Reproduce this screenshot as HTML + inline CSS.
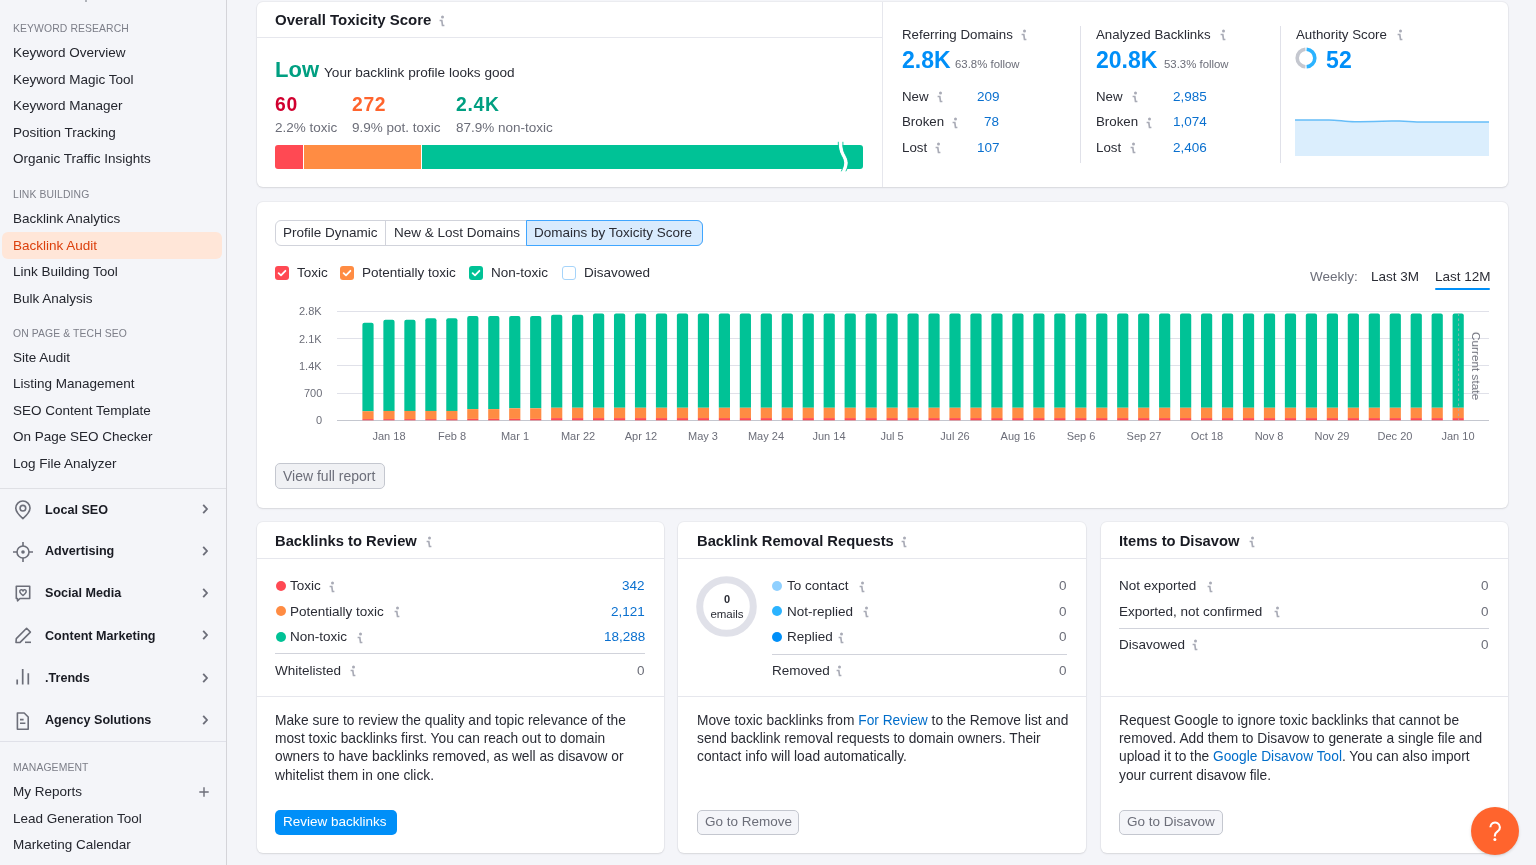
<!DOCTYPE html>
<html><head><meta charset="utf-8"><title>Backlink Audit</title>
<style>
html,body{margin:0;padding:0;}
body{width:1536px;height:865px;overflow:hidden;background:#f4f5f9;position:relative;font-family:"Liberation Sans",sans-serif;}
.t{position:absolute;line-height:20px;white-space:nowrap;will-change:transform;}
.r{position:absolute;box-sizing:border-box;}
.ic{position:absolute;overflow:visible;}
.card{position:absolute;background:#fff;border-radius:6px;box-shadow:0 1px 2px rgba(25,27,35,.10),0 0 0 1px rgba(25,27,35,.035);}
.hl{position:absolute;height:1px;background:#e0e1e9;}
.vl{position:absolute;width:1px;background:#e0e1e9;}
</style></head><body>

<div class="r" style="left:226px;top:0px;width:1px;height:865px;background:#d4d4d9;"></div>
<div class="r" style="left:85px;top:0px;width:2px;height:2px;background:#9a9ca5;border-radius:1px;"></div>
<div class="t" style="top:19.20px;font-size:10.4px;color:#7c7e88;letter-spacing:0.1px;left:13.00px;">KEYWORD RESEARCH</div>
<div class="t" style="top:43.02px;font-size:13.5px;color:#24262e;left:13.00px;">Keyword Overview</div>
<div class="t" style="top:69.52px;font-size:13.5px;color:#24262e;left:13.00px;">Keyword Magic Tool</div>
<div class="t" style="top:96.02px;font-size:13.5px;color:#24262e;left:13.00px;">Keyword Manager</div>
<div class="t" style="top:122.52px;font-size:13.5px;color:#24262e;left:13.00px;">Position Tracking</div>
<div class="t" style="top:149.02px;font-size:13.5px;color:#24262e;left:13.00px;">Organic Traffic Insights</div>
<div class="t" style="top:184.90px;font-size:10.4px;color:#7c7e88;letter-spacing:0.1px;left:13.00px;">LINK BUILDING</div>
<div class="r" style="left:2px;top:231.5px;width:220px;height:27px;background:#ffe6d8;border-radius:6px;"></div>
<div class="t" style="top:209.22px;font-size:13.5px;color:#24262e;left:13.00px;">Backlink Analytics</div>
<div class="t" style="top:235.82px;font-size:13.5px;color:#dc3f0c;left:13.00px;">Backlink Audit</div>
<div class="t" style="top:262.42px;font-size:13.5px;color:#24262e;left:13.00px;">Link Building Tool</div>
<div class="t" style="top:289.02px;font-size:13.5px;color:#24262e;left:13.00px;">Bulk Analysis</div>
<div class="t" style="top:323.90px;font-size:10.4px;color:#7c7e88;letter-spacing:0.1px;left:13.00px;">ON PAGE &amp; TECH SEO</div>
<div class="t" style="top:347.92px;font-size:13.5px;color:#24262e;left:13.00px;">Site Audit</div>
<div class="t" style="top:374.42px;font-size:13.5px;color:#24262e;left:13.00px;">Listing Management</div>
<div class="t" style="top:400.92px;font-size:13.5px;color:#24262e;left:13.00px;">SEO Content Template</div>
<div class="t" style="top:427.42px;font-size:13.5px;color:#24262e;left:13.00px;">On Page SEO Checker</div>
<div class="t" style="top:453.92px;font-size:13.5px;color:#24262e;left:13.00px;">Log File Analyzer</div>
<div class="r" style="left:0px;top:487.5px;width:226px;height:1px;background:#dfe0e5;"></div>
<svg class="ic" style="left:14px;top:499px" width="18" height="21" viewBox="0 0 18 21"><path d="M8.9 19.6C8.9 19.6 1.8 13.6 1.8 9.1A7.1 7.1 0 0 1 16 9.1C16 13.6 8.9 19.6 8.9 19.6Z" fill="none" stroke="#6c6e79" stroke-width="1.6" stroke-linejoin="round"/><circle cx="8.9" cy="9.2" r="2.8" fill="none" stroke="#6c6e79" stroke-width="1.6"/></svg>
<div class="t" style="top:499.83px;font-size:12.6px;color:#191b23;font-weight:700;left:44.50px;">Local SEO</div>
<svg class="ic" style="left:201px;top:503.3px" width="8" height="12" viewBox="0 0 8 12"><path d="M2.2 1.8L6 6L2.2 10.2" fill="none" stroke="#6c6e79" stroke-width="1.8"/></svg>
<svg class="ic" style="left:13px;top:541.5px" width="20" height="20" viewBox="0 0 20 20"><circle cx="10" cy="10" r="6" fill="none" stroke="#6c6e79" stroke-width="1.6"/><circle cx="10" cy="10" r="1.8" fill="#6c6e79"/><path d="M10 0V4M10 16V20M0 10H4M16 10H20" stroke="#6c6e79" stroke-width="1.6"/></svg>
<div class="t" style="top:541.33px;font-size:12.6px;color:#191b23;font-weight:700;left:44.50px;">Advertising</div>
<svg class="ic" style="left:201px;top:544.8px" width="8" height="12" viewBox="0 0 8 12"><path d="M2.2 1.8L6 6L2.2 10.2" fill="none" stroke="#6c6e79" stroke-width="1.8"/></svg>
<svg class="ic" style="left:14px;top:584.3px" width="18" height="18" viewBox="0 0 18 18"><path d="M2.3 2.3H15.7V14.5H6L3.5 16.8V14.5H2.3Z" fill="none" stroke="#6c6e79" stroke-width="1.6" stroke-linejoin="round"/><path d="M9 11.5C7 10 5.8 9 5.8 7.6A1.6 1.6 0 0 1 9 7A1.6 1.6 0 0 1 12.2 7.6C12.2 9 11 10 9 11.5Z" fill="none" stroke="#6c6e79" stroke-width="1.5" stroke-linejoin="round"/></svg>
<div class="t" style="top:583.33px;font-size:12.6px;color:#191b23;font-weight:700;left:44.50px;">Social Media</div>
<svg class="ic" style="left:201px;top:586.8px" width="8" height="12" viewBox="0 0 8 12"><path d="M2.2 1.8L6 6L2.2 10.2" fill="none" stroke="#6c6e79" stroke-width="1.8"/></svg>
<svg class="ic" style="left:13.5px;top:626px" width="19" height="19" viewBox="0 0 19 19"><path d="M2 16.5L2.3 12.6L12.6 2.3L16.4 6.1L6.1 16.4Z" fill="none" stroke="#6c6e79" stroke-width="1.6" stroke-linejoin="round"/><path d="M11 16.3H17" stroke="#6c6e79" stroke-width="1.6"/></svg>
<div class="t" style="top:625.83px;font-size:12.6px;color:#191b23;font-weight:700;left:44.50px;">Content Marketing</div>
<svg class="ic" style="left:201px;top:629.3px" width="8" height="12" viewBox="0 0 8 12"><path d="M2.2 1.8L6 6L2.2 10.2" fill="none" stroke="#6c6e79" stroke-width="1.8"/></svg>
<svg class="ic" style="left:14px;top:669px" width="18" height="18" viewBox="0 0 18 18"><path d="M3.2 10.5V15.5M8.7 0V15.5M14.3 4.3V15.5" stroke="#6c6e79" stroke-width="1.7"/></svg>
<div class="t" style="top:668.03px;font-size:12.6px;color:#191b23;font-weight:700;left:44.50px;">.Trends</div>
<svg class="ic" style="left:201px;top:671.5px" width="8" height="12" viewBox="0 0 8 12"><path d="M2.2 1.8L6 6L2.2 10.2" fill="none" stroke="#6c6e79" stroke-width="1.8"/></svg>
<svg class="ic" style="left:13.5px;top:711px" width="17" height="20" viewBox="0 0 17 20"><path d="M3.4 2H10.2L14.2 6V18.2H3.4Z" fill="none" stroke="#6c6e79" stroke-width="1.6" stroke-linejoin="round"/><path d="M6 8.6H9.6M6 12.2H11.4" stroke="#6c6e79" stroke-width="1.6"/></svg>
<div class="t" style="top:710.33px;font-size:12.6px;color:#191b23;font-weight:700;left:44.50px;">Agency Solutions</div>
<svg class="ic" style="left:201px;top:713.8px" width="8" height="12" viewBox="0 0 8 12"><path d="M2.2 1.8L6 6L2.2 10.2" fill="none" stroke="#6c6e79" stroke-width="1.8"/></svg>
<div class="r" style="left:0px;top:741px;width:226px;height:1px;background:#e0e1e9;"></div>
<div class="t" style="top:757.90px;font-size:10.4px;color:#7c7e88;letter-spacing:0.1px;left:13.00px;">MANAGEMENT</div>
<div class="t" style="top:781.82px;font-size:13.5px;color:#24262e;left:13.00px;">My Reports</div>
<svg class="ic" style="left:198px;top:785.8px" width="12" height="12" viewBox="0 0 12 12"><path d="M6 1.3V10.7M1.3 6H10.7" stroke="#6c6e79" stroke-width="1.4"/></svg>
<div class="t" style="top:808.52px;font-size:13.5px;color:#24262e;left:13.00px;">Lead Generation Tool</div>
<div class="t" style="top:835.32px;font-size:13.5px;color:#24262e;left:13.00px;">Marketing Calendar</div>
<div class="card" style="left:257px;top:2px;width:1251px;height:185px;"></div>
<div class="r" style="left:257px;top:37px;width:625px;height:1px;background:#e6e7ed;"></div>
<div class="r" style="left:882px;top:2px;width:1px;height:185px;background:#e6e7ed;"></div>
<div class="t" style="top:10.40px;font-size:15px;color:#191b23;font-weight:700;left:275.00px;">Overall Toxicity Score</div>
<svg class="ic" style="left:439.00px;top:15.30px" width="7" height="12" viewBox="0 0 7 12"><circle cx="3.5" cy="2.0" r="1.5" fill="#a9abb6"/><path d="M0.6 5.5H2.8L3.5 10.5H5.4" fill="none" stroke="#a9abb6" stroke-width="1.7"/></svg>
<div class="t" style="top:60.38px;font-size:22px;color:#009f81;font-weight:700;left:275.00px;">Low</div>
<div class="t" style="top:63.29px;font-size:13.6px;color:#2a2c35;left:324.00px;">Your backlink profile looks good</div>
<div class="t" style="top:94.81px;font-size:19.3px;color:#d1002f;font-weight:700;letter-spacing:0.7px;left:275.00px;">60</div>
<div class="t" style="top:94.81px;font-size:19.3px;color:#ff642d;font-weight:700;letter-spacing:0.7px;left:352.00px;">272</div>
<div class="t" style="top:94.81px;font-size:19.3px;color:#009f81;font-weight:700;letter-spacing:0.7px;left:456.00px;">2.4K</div>
<div class="t" style="top:118.42px;font-size:13.5px;color:#6c6e79;left:275.00px;">2.2% toxic</div>
<div class="t" style="top:118.42px;font-size:13.5px;color:#6c6e79;left:352.00px;">9.9% pot. toxic</div>
<div class="t" style="top:118.42px;font-size:13.5px;color:#6c6e79;left:456.00px;">87.9% non-toxic</div>
<div class="r" style="left:422px;top:145px;width:441px;height:24px;background:#00c296;border-radius:0 3px 3px 0;"></div>
<div class="r" style="left:275px;top:145px;width:28px;height:24px;background:#ff4953;border-radius:3px 0 0 3px;"></div>
<div class="r" style="left:304px;top:145px;width:117px;height:24px;background:#ff8c43;"></div>
<svg class="ic" style="left:834px;top:141px" width="18" height="32" viewBox="0 0 18 32"><path d="M6.60 0.80C6.30 7.00 7.50 11.00 9.50 14.50C11.50 18.00 12.50 21.00 11.80 24.00C11.30 26.50 10.50 28.50 9.60 30.30" fill="none" stroke="#fff" stroke-width="3.9"/><path d="M4.30 0.80C4.00 7.00 5.20 11.00 7.20 14.50C9.20 18.00 10.20 21.00 9.50 24.00C9.00 26.50 8.20 28.50 7.30 30.30" fill="none" stroke="#00c296" stroke-width="0.9"/><path d="M8.90 0.80C8.60 7.00 9.80 11.00 11.80 14.50C13.80 18.00 14.80 21.00 14.10 24.00C13.60 26.50 12.80 28.50 11.90 30.30" fill="none" stroke="#00c296" stroke-width="0.9"/></svg>
<div class="t" style="top:24.99px;font-size:13.3px;color:#2a2c35;left:901.60px;">Referring Domains</div>
<svg class="ic" style="left:1020.50px;top:29.30px" width="7" height="12" viewBox="0 0 7 12"><circle cx="3.5" cy="2.0" r="1.5" fill="#a9abb6"/><path d="M0.6 5.5H2.8L3.5 10.5H5.4" fill="none" stroke="#a9abb6" stroke-width="1.7"/></svg>
<div class="t" style="top:49.83px;font-size:23px;color:#008ff8;font-weight:700;left:901.60px;">2.8K</div>
<div class="t" style="top:53.65px;font-size:11.4px;color:#6c6e79;left:955.10px;">63.8% follow</div>
<div class="t" style="top:86.79px;font-size:13.3px;color:#2a2c35;left:901.60px;">New</div>
<svg class="ic" style="left:936.50px;top:91.10px" width="7" height="12" viewBox="0 0 7 12"><circle cx="3.5" cy="2.0" r="1.5" fill="#a9abb6"/><path d="M0.6 5.5H2.8L3.5 10.5H5.4" fill="none" stroke="#a9abb6" stroke-width="1.7"/></svg>
<div class="t" style="top:86.72px;font-size:13.5px;color:#0a70cf;right:536.50px;">209</div>
<div class="t" style="top:112.29px;font-size:13.3px;color:#2a2c35;left:901.60px;">Broken</div>
<svg class="ic" style="left:951.80px;top:116.60px" width="7" height="12" viewBox="0 0 7 12"><circle cx="3.5" cy="2.0" r="1.5" fill="#a9abb6"/><path d="M0.6 5.5H2.8L3.5 10.5H5.4" fill="none" stroke="#a9abb6" stroke-width="1.7"/></svg>
<div class="t" style="top:112.22px;font-size:13.5px;color:#0a70cf;right:536.50px;">78</div>
<div class="t" style="top:137.79px;font-size:13.3px;color:#2a2c35;left:901.60px;">Lost</div>
<svg class="ic" style="left:934.80px;top:142.10px" width="7" height="12" viewBox="0 0 7 12"><circle cx="3.5" cy="2.0" r="1.5" fill="#a9abb6"/><path d="M0.6 5.5H2.8L3.5 10.5H5.4" fill="none" stroke="#a9abb6" stroke-width="1.7"/></svg>
<div class="t" style="top:137.72px;font-size:13.5px;color:#0a70cf;right:536.50px;">107</div>
<div class="r" style="left:1080px;top:26px;width:1px;height:137px;background:#e0e1e9;"></div>
<div class="t" style="top:24.99px;font-size:13.3px;color:#2a2c35;left:1096.00px;">Analyzed Backlinks</div>
<svg class="ic" style="left:1220.30px;top:29.30px" width="7" height="12" viewBox="0 0 7 12"><circle cx="3.5" cy="2.0" r="1.5" fill="#a9abb6"/><path d="M0.6 5.5H2.8L3.5 10.5H5.4" fill="none" stroke="#a9abb6" stroke-width="1.7"/></svg>
<div class="t" style="top:49.83px;font-size:23px;color:#008ff8;font-weight:700;left:1096.00px;">20.8K</div>
<div class="t" style="top:53.65px;font-size:11.4px;color:#6c6e79;left:1163.80px;">53.3% follow</div>
<div class="t" style="top:86.79px;font-size:13.3px;color:#2a2c35;left:1096.00px;">New</div>
<svg class="ic" style="left:1131.50px;top:91.10px" width="7" height="12" viewBox="0 0 7 12"><circle cx="3.5" cy="2.0" r="1.5" fill="#a9abb6"/><path d="M0.6 5.5H2.8L3.5 10.5H5.4" fill="none" stroke="#a9abb6" stroke-width="1.7"/></svg>
<div class="t" style="top:86.72px;font-size:13.5px;color:#0a70cf;right:329.70px;">2,985</div>
<div class="t" style="top:112.29px;font-size:13.3px;color:#2a2c35;left:1096.00px;">Broken</div>
<svg class="ic" style="left:1146.00px;top:116.60px" width="7" height="12" viewBox="0 0 7 12"><circle cx="3.5" cy="2.0" r="1.5" fill="#a9abb6"/><path d="M0.6 5.5H2.8L3.5 10.5H5.4" fill="none" stroke="#a9abb6" stroke-width="1.7"/></svg>
<div class="t" style="top:112.22px;font-size:13.5px;color:#0a70cf;right:329.70px;">1,074</div>
<div class="t" style="top:137.79px;font-size:13.3px;color:#2a2c35;left:1096.00px;">Lost</div>
<svg class="ic" style="left:1129.90px;top:142.10px" width="7" height="12" viewBox="0 0 7 12"><circle cx="3.5" cy="2.0" r="1.5" fill="#a9abb6"/><path d="M0.6 5.5H2.8L3.5 10.5H5.4" fill="none" stroke="#a9abb6" stroke-width="1.7"/></svg>
<div class="t" style="top:137.72px;font-size:13.5px;color:#0a70cf;right:329.70px;">2,406</div>
<div class="r" style="left:1280px;top:26px;width:1px;height:137px;background:#e0e1e9;"></div>
<div class="t" style="top:24.89px;font-size:13.3px;color:#2a2c35;left:1295.70px;">Authority Score</div>
<svg class="ic" style="left:1396.50px;top:29.20px" width="7" height="12" viewBox="0 0 7 12"><circle cx="3.5" cy="2.0" r="1.5" fill="#a9abb6"/><path d="M0.6 5.5H2.8L3.5 10.5H5.4" fill="none" stroke="#a9abb6" stroke-width="1.7"/></svg>
<svg class="ic" style="left:1295px;top:47px" width="22" height="22" viewBox="0 0 22 22"><path d="M10.4 2.22A8.8 8.8 0 0 0 10.4 19.78" fill="none" stroke="#c4c7cf" stroke-width="3.6"/><path d="M11.6 2.22A8.8 8.8 0 0 1 11.6 19.78" fill="none" stroke="#2bb3ff" stroke-width="3.6"/></svg>
<div class="t" style="top:50.13px;font-size:23px;color:#008ff8;font-weight:700;letter-spacing:0.2px;left:1325.50px;">52</div>
<svg class="ic" style="left:1295px;top:117px" width="195" height="40" viewBox="0 0 195 40"><path d="M0 2.9H34C42 2.9 50 4.5 60 4.7C75 4.9 90 4.3 104 3.9C112 3.8 115 4.9 122 4.9H194V39H0Z" fill="#dbeefd"/><path d="M0 2.9H34C42 2.9 50 4.5 60 4.7C75 4.9 90 4.3 104 3.9C112 3.8 115 4.9 122 4.9H194" fill="none" stroke="#66bdf8" stroke-width="1.5"/></svg>
<div class="card" style="left:257px;top:201.5px;width:1251px;height:306px;"></div>
<div class="r" style="left:275px;top:220px;width:428px;height:26px;border:1px solid #d1d3db;border-radius:6px;"></div>
<div class="r" style="left:385px;top:220px;width:1px;height:26px;background:#d1d3db;"></div>
<div class="r" style="left:526px;top:220px;width:177px;height:26px;border:1px solid #40a6ff;border-radius:0 6px 6px 0;background:#d9ebfd;"></div>
<div class="t" style="top:223.32px;font-size:13.5px;color:#2a2c35;left:283.40px;">Profile Dynamic</div>
<div class="t" style="top:223.32px;font-size:13.5px;color:#2a2c35;left:393.50px;">New &amp; Lost Domains</div>
<div class="t" style="top:223.32px;font-size:13.5px;color:#2a2c35;left:534.40px;">Domains by Toxicity Score</div>
<svg class="ic" style="left:275px;top:266px" width="14" height="14" viewBox="0 0 14 14"><rect x="0" y="0" width="14" height="14" rx="3" fill="#ff4953"/><path d="M3.6 7.2L6 9.4L10.4 4.8" fill="none" stroke="#fff" stroke-width="1.8" stroke-linecap="round" stroke-linejoin="round"/></svg>
<div class="t" style="top:263.32px;font-size:13.5px;color:#2a2c35;left:297.30px;">Toxic</div>
<svg class="ic" style="left:339.5px;top:266px" width="14" height="14" viewBox="0 0 14 14"><rect x="0" y="0" width="14" height="14" rx="3" fill="#ff8c43"/><path d="M3.6 7.2L6 9.4L10.4 4.8" fill="none" stroke="#fff" stroke-width="1.8" stroke-linecap="round" stroke-linejoin="round"/></svg>
<div class="t" style="top:263.32px;font-size:13.5px;color:#2a2c35;left:361.80px;">Potentially toxic</div>
<svg class="ic" style="left:468.5px;top:266px" width="14" height="14" viewBox="0 0 14 14"><rect x="0" y="0" width="14" height="14" rx="3" fill="#00c296"/><path d="M3.6 7.2L6 9.4L10.4 4.8" fill="none" stroke="#fff" stroke-width="1.8" stroke-linecap="round" stroke-linejoin="round"/></svg>
<div class="t" style="top:263.32px;font-size:13.5px;color:#2a2c35;left:490.70px;">Non-toxic</div>
<svg class="ic" style="left:561.5px;top:266px" width="14" height="14" viewBox="0 0 14 14"><rect x="0.5" y="0.5" width="13" height="13" rx="2.5" fill="#fff" stroke="#a6d4fa" stroke-width="1"/></svg>
<div class="t" style="top:263.32px;font-size:13.5px;color:#2a2c35;left:583.60px;">Disavowed</div>
<div class="t" style="top:267.32px;font-size:13.5px;color:#6c6e79;left:1309.70px;">Weekly:</div>
<div class="t" style="top:267.32px;font-size:13.5px;color:#2a2c35;left:1371.00px;">Last 3M</div>
<div class="t" style="top:267.32px;font-size:13.5px;color:#2a2c35;left:1435.00px;">Last 12M</div>
<div class="r" style="left:1435px;top:288px;width:55px;height:2px;background:#008ff8;border-radius:1px;"></div>
<div class="r" style="left:337px;top:311.0px;width:1152px;height:1px;background:#e0e1e9;"></div>
<div class="t" style="top:301.39px;font-size:11px;color:#6c6e79;right:1214.00px;">2.8K</div>
<div class="r" style="left:337px;top:338.2px;width:1152px;height:1px;background:#e0e1e9;"></div>
<div class="t" style="top:328.59px;font-size:11px;color:#6c6e79;right:1214.00px;">2.1K</div>
<div class="r" style="left:337px;top:365.4px;width:1152px;height:1px;background:#e0e1e9;"></div>
<div class="t" style="top:355.79px;font-size:11px;color:#6c6e79;right:1214.00px;">1.4K</div>
<div class="r" style="left:337px;top:392.6px;width:1152px;height:1px;background:#e0e1e9;"></div>
<div class="t" style="top:382.99px;font-size:11px;color:#6c6e79;right:1214.00px;">700</div>
<div class="r" style="left:337px;top:419.8px;width:1152px;height:1px;background:#c4c7cf;"></div>
<div class="t" style="top:410.19px;font-size:11px;color:#6c6e79;right:1214.00px;">0</div>
<svg class="ic" style="left:0px;top:0px" width="1536" height="865" viewBox="0 0 1536 865"><path d="M362.40 411.20V324.70Q362.40 322.70 364.40 322.70H371.60Q373.60 322.70 373.60 324.70V411.20Z" fill="#00c296"/><rect x="362.40" y="411.20" width="11.2" height="7.90" fill="#ff8c43"/><rect x="362.40" y="419.10" width="11.2" height="1.20" fill="#ff4953"/><path d="M383.36 410.90V321.80Q383.36 319.80 385.36 319.80H392.56Q394.56 319.80 394.56 321.80V410.90Z" fill="#00c296"/><rect x="383.36" y="410.90" width="11.2" height="8.20" fill="#ff8c43"/><rect x="383.36" y="419.10" width="11.2" height="1.20" fill="#ff4953"/><path d="M404.33 410.90V321.80Q404.33 319.80 406.33 319.80H413.53Q415.53 319.80 415.53 321.80V410.90Z" fill="#00c296"/><rect x="404.33" y="410.90" width="11.2" height="8.20" fill="#ff8c43"/><rect x="404.33" y="419.10" width="11.2" height="1.20" fill="#ff4953"/><path d="M425.29 410.90V320.20Q425.29 318.20 427.29 318.20H434.49Q436.49 318.20 436.49 320.20V410.90Z" fill="#00c296"/><rect x="425.29" y="410.90" width="11.2" height="8.20" fill="#ff8c43"/><rect x="425.29" y="419.10" width="11.2" height="1.20" fill="#ff4953"/><path d="M446.26 410.90V320.20Q446.26 318.20 448.26 318.20H455.46Q457.46 318.20 457.46 320.20V410.90Z" fill="#00c296"/><rect x="446.26" y="410.90" width="11.2" height="8.20" fill="#ff8c43"/><rect x="446.26" y="419.10" width="11.2" height="1.20" fill="#ff4953"/><path d="M467.22 409.10V318.10Q467.22 316.10 469.22 316.10H476.42Q478.42 316.10 478.42 318.10V409.10Z" fill="#00c296"/><rect x="467.22" y="409.10" width="11.2" height="9.80" fill="#ff8c43"/><rect x="467.22" y="418.90" width="11.2" height="1.40" fill="#ff4953"/><path d="M488.19 409.10V318.10Q488.19 316.10 490.19 316.10H497.39Q499.39 316.10 499.39 318.10V409.10Z" fill="#00c296"/><rect x="488.19" y="409.10" width="11.2" height="9.80" fill="#ff8c43"/><rect x="488.19" y="418.90" width="11.2" height="1.40" fill="#ff4953"/><path d="M509.15 408.30V318.10Q509.15 316.10 511.15 316.10H518.36Q520.36 316.10 520.36 318.10V408.30Z" fill="#00c296"/><rect x="509.15" y="408.30" width="11.2" height="10.60" fill="#ff8c43"/><rect x="509.15" y="418.90" width="11.2" height="1.40" fill="#ff4953"/><path d="M530.12 408.30V318.10Q530.12 316.10 532.12 316.10H539.32Q541.32 316.10 541.32 318.10V408.30Z" fill="#00c296"/><rect x="530.12" y="408.30" width="11.2" height="10.60" fill="#ff8c43"/><rect x="530.12" y="418.90" width="11.2" height="1.40" fill="#ff4953"/><path d="M551.09 407.80V316.80Q551.09 314.80 553.09 314.80H560.29Q562.29 314.80 562.29 316.80V407.80Z" fill="#00c296"/><rect x="551.09" y="407.80" width="11.2" height="10.30" fill="#ff8c43"/><rect x="551.09" y="418.10" width="11.2" height="2.20" fill="#ff4953"/><path d="M572.05 407.80V316.80Q572.05 314.80 574.05 314.80H581.25Q583.25 314.80 583.25 316.80V407.80Z" fill="#00c296"/><rect x="572.05" y="407.80" width="11.2" height="10.30" fill="#ff8c43"/><rect x="572.05" y="418.10" width="11.2" height="2.20" fill="#ff4953"/><path d="M593.01 407.80V315.40Q593.01 313.40 595.01 313.40H602.22Q604.22 313.40 604.22 315.40V407.80Z" fill="#00c296"/><rect x="593.01" y="407.80" width="11.2" height="10.30" fill="#ff8c43"/><rect x="593.01" y="418.10" width="11.2" height="2.20" fill="#ff4953"/><path d="M613.98 407.80V315.40Q613.98 313.40 615.98 313.40H623.18Q625.18 313.40 625.18 315.40V407.80Z" fill="#00c296"/><rect x="613.98" y="407.80" width="11.2" height="10.30" fill="#ff8c43"/><rect x="613.98" y="418.10" width="11.2" height="2.20" fill="#ff4953"/><path d="M634.94 407.80V315.40Q634.94 313.40 636.94 313.40H644.14Q646.14 313.40 646.14 315.40V407.80Z" fill="#00c296"/><rect x="634.94" y="407.80" width="11.2" height="10.30" fill="#ff8c43"/><rect x="634.94" y="418.10" width="11.2" height="2.20" fill="#ff4953"/><path d="M655.91 407.80V315.40Q655.91 313.40 657.91 313.40H665.11Q667.11 313.40 667.11 315.40V407.80Z" fill="#00c296"/><rect x="655.91" y="407.80" width="11.2" height="10.30" fill="#ff8c43"/><rect x="655.91" y="418.10" width="11.2" height="2.20" fill="#ff4953"/><path d="M676.88 407.80V315.40Q676.88 313.40 678.88 313.40H686.08Q688.08 313.40 688.08 315.40V407.80Z" fill="#00c296"/><rect x="676.88" y="407.80" width="11.2" height="10.30" fill="#ff8c43"/><rect x="676.88" y="418.10" width="11.2" height="2.20" fill="#ff4953"/><path d="M697.84 407.80V315.40Q697.84 313.40 699.84 313.40H707.04Q709.04 313.40 709.04 315.40V407.80Z" fill="#00c296"/><rect x="697.84" y="407.80" width="11.2" height="10.30" fill="#ff8c43"/><rect x="697.84" y="418.10" width="11.2" height="2.20" fill="#ff4953"/><path d="M718.80 407.80V315.40Q718.80 313.40 720.80 313.40H728.00Q730.00 313.40 730.00 315.40V407.80Z" fill="#00c296"/><rect x="718.80" y="407.80" width="11.2" height="10.30" fill="#ff8c43"/><rect x="718.80" y="418.10" width="11.2" height="2.20" fill="#ff4953"/><path d="M739.77 407.80V315.40Q739.77 313.40 741.77 313.40H748.97Q750.97 313.40 750.97 315.40V407.80Z" fill="#00c296"/><rect x="739.77" y="407.80" width="11.2" height="10.30" fill="#ff8c43"/><rect x="739.77" y="418.10" width="11.2" height="2.20" fill="#ff4953"/><path d="M760.73 407.80V315.40Q760.73 313.40 762.73 313.40H769.93Q771.93 313.40 771.93 315.40V407.80Z" fill="#00c296"/><rect x="760.73" y="407.80" width="11.2" height="10.30" fill="#ff8c43"/><rect x="760.73" y="418.10" width="11.2" height="2.20" fill="#ff4953"/><path d="M781.70 407.80V315.40Q781.70 313.40 783.70 313.40H790.90Q792.90 313.40 792.90 315.40V407.80Z" fill="#00c296"/><rect x="781.70" y="407.80" width="11.2" height="10.30" fill="#ff8c43"/><rect x="781.70" y="418.10" width="11.2" height="2.20" fill="#ff4953"/><path d="M802.66 407.80V315.40Q802.66 313.40 804.66 313.40H811.87Q813.87 313.40 813.87 315.40V407.80Z" fill="#00c296"/><rect x="802.66" y="407.80" width="11.2" height="10.30" fill="#ff8c43"/><rect x="802.66" y="418.10" width="11.2" height="2.20" fill="#ff4953"/><path d="M823.63 407.80V315.40Q823.63 313.40 825.63 313.40H832.83Q834.83 313.40 834.83 315.40V407.80Z" fill="#00c296"/><rect x="823.63" y="407.80" width="11.2" height="10.30" fill="#ff8c43"/><rect x="823.63" y="418.10" width="11.2" height="2.20" fill="#ff4953"/><path d="M844.60 407.80V315.40Q844.60 313.40 846.60 313.40H853.80Q855.80 313.40 855.80 315.40V407.80Z" fill="#00c296"/><rect x="844.60" y="407.80" width="11.2" height="10.30" fill="#ff8c43"/><rect x="844.60" y="418.10" width="11.2" height="2.20" fill="#ff4953"/><path d="M865.56 407.80V315.40Q865.56 313.40 867.56 313.40H874.76Q876.76 313.40 876.76 315.40V407.80Z" fill="#00c296"/><rect x="865.56" y="407.80" width="11.2" height="10.30" fill="#ff8c43"/><rect x="865.56" y="418.10" width="11.2" height="2.20" fill="#ff4953"/><path d="M886.52 407.80V315.40Q886.52 313.40 888.52 313.40H895.73Q897.73 313.40 897.73 315.40V407.80Z" fill="#00c296"/><rect x="886.52" y="407.80" width="11.2" height="10.30" fill="#ff8c43"/><rect x="886.52" y="418.10" width="11.2" height="2.20" fill="#ff4953"/><path d="M907.49 407.80V315.40Q907.49 313.40 909.49 313.40H916.69Q918.69 313.40 918.69 315.40V407.80Z" fill="#00c296"/><rect x="907.49" y="407.80" width="11.2" height="10.30" fill="#ff8c43"/><rect x="907.49" y="418.10" width="11.2" height="2.20" fill="#ff4953"/><path d="M928.45 407.80V315.40Q928.45 313.40 930.45 313.40H937.65Q939.65 313.40 939.65 315.40V407.80Z" fill="#00c296"/><rect x="928.45" y="407.80" width="11.2" height="10.30" fill="#ff8c43"/><rect x="928.45" y="418.10" width="11.2" height="2.20" fill="#ff4953"/><path d="M949.42 407.80V315.40Q949.42 313.40 951.42 313.40H958.62Q960.62 313.40 960.62 315.40V407.80Z" fill="#00c296"/><rect x="949.42" y="407.80" width="11.2" height="10.30" fill="#ff8c43"/><rect x="949.42" y="418.10" width="11.2" height="2.20" fill="#ff4953"/><path d="M970.38 407.80V315.40Q970.38 313.40 972.38 313.40H979.59Q981.59 313.40 981.59 315.40V407.80Z" fill="#00c296"/><rect x="970.38" y="407.80" width="11.2" height="10.30" fill="#ff8c43"/><rect x="970.38" y="418.10" width="11.2" height="2.20" fill="#ff4953"/><path d="M991.35 407.80V315.40Q991.35 313.40 993.35 313.40H1000.55Q1002.55 313.40 1002.55 315.40V407.80Z" fill="#00c296"/><rect x="991.35" y="407.80" width="11.2" height="10.30" fill="#ff8c43"/><rect x="991.35" y="418.10" width="11.2" height="2.20" fill="#ff4953"/><path d="M1012.31 407.80V315.40Q1012.31 313.40 1014.31 313.40H1021.51Q1023.51 313.40 1023.51 315.40V407.80Z" fill="#00c296"/><rect x="1012.31" y="407.80" width="11.2" height="10.30" fill="#ff8c43"/><rect x="1012.31" y="418.10" width="11.2" height="2.20" fill="#ff4953"/><path d="M1033.28 407.80V315.40Q1033.28 313.40 1035.28 313.40H1042.48Q1044.48 313.40 1044.48 315.40V407.80Z" fill="#00c296"/><rect x="1033.28" y="407.80" width="11.2" height="10.30" fill="#ff8c43"/><rect x="1033.28" y="418.10" width="11.2" height="2.20" fill="#ff4953"/><path d="M1054.24 407.80V315.40Q1054.24 313.40 1056.24 313.40H1063.44Q1065.44 313.40 1065.44 315.40V407.80Z" fill="#00c296"/><rect x="1054.24" y="407.80" width="11.2" height="10.30" fill="#ff8c43"/><rect x="1054.24" y="418.10" width="11.2" height="2.20" fill="#ff4953"/><path d="M1075.21 407.80V315.40Q1075.21 313.40 1077.21 313.40H1084.41Q1086.41 313.40 1086.41 315.40V407.80Z" fill="#00c296"/><rect x="1075.21" y="407.80" width="11.2" height="10.30" fill="#ff8c43"/><rect x="1075.21" y="418.10" width="11.2" height="2.20" fill="#ff4953"/><path d="M1096.17 407.80V315.40Q1096.17 313.40 1098.17 313.40H1105.38Q1107.38 313.40 1107.38 315.40V407.80Z" fill="#00c296"/><rect x="1096.17" y="407.80" width="11.2" height="10.30" fill="#ff8c43"/><rect x="1096.17" y="418.10" width="11.2" height="2.20" fill="#ff4953"/><path d="M1117.14 407.80V315.40Q1117.14 313.40 1119.14 313.40H1126.34Q1128.34 313.40 1128.34 315.40V407.80Z" fill="#00c296"/><rect x="1117.14" y="407.80" width="11.2" height="10.30" fill="#ff8c43"/><rect x="1117.14" y="418.10" width="11.2" height="2.20" fill="#ff4953"/><path d="M1138.11 407.80V315.40Q1138.11 313.40 1140.11 313.40H1147.31Q1149.31 313.40 1149.31 315.40V407.80Z" fill="#00c296"/><rect x="1138.11" y="407.80" width="11.2" height="10.30" fill="#ff8c43"/><rect x="1138.11" y="418.10" width="11.2" height="2.20" fill="#ff4953"/><path d="M1159.07 407.80V315.40Q1159.07 313.40 1161.07 313.40H1168.27Q1170.27 313.40 1170.27 315.40V407.80Z" fill="#00c296"/><rect x="1159.07" y="407.80" width="11.2" height="10.30" fill="#ff8c43"/><rect x="1159.07" y="418.10" width="11.2" height="2.20" fill="#ff4953"/><path d="M1180.03 407.80V315.40Q1180.03 313.40 1182.03 313.40H1189.23Q1191.23 313.40 1191.23 315.40V407.80Z" fill="#00c296"/><rect x="1180.03" y="407.80" width="11.2" height="10.30" fill="#ff8c43"/><rect x="1180.03" y="418.10" width="11.2" height="2.20" fill="#ff4953"/><path d="M1201.00 407.80V315.40Q1201.00 313.40 1203.00 313.40H1210.20Q1212.20 313.40 1212.20 315.40V407.80Z" fill="#00c296"/><rect x="1201.00" y="407.80" width="11.2" height="10.30" fill="#ff8c43"/><rect x="1201.00" y="418.10" width="11.2" height="2.20" fill="#ff4953"/><path d="M1221.96 407.80V315.40Q1221.96 313.40 1223.96 313.40H1231.16Q1233.16 313.40 1233.16 315.40V407.80Z" fill="#00c296"/><rect x="1221.96" y="407.80" width="11.2" height="10.30" fill="#ff8c43"/><rect x="1221.96" y="418.10" width="11.2" height="2.20" fill="#ff4953"/><path d="M1242.93 407.80V315.40Q1242.93 313.40 1244.93 313.40H1252.13Q1254.13 313.40 1254.13 315.40V407.80Z" fill="#00c296"/><rect x="1242.93" y="407.80" width="11.2" height="10.30" fill="#ff8c43"/><rect x="1242.93" y="418.10" width="11.2" height="2.20" fill="#ff4953"/><path d="M1263.89 407.80V315.40Q1263.89 313.40 1265.89 313.40H1273.10Q1275.10 313.40 1275.10 315.40V407.80Z" fill="#00c296"/><rect x="1263.89" y="407.80" width="11.2" height="10.30" fill="#ff8c43"/><rect x="1263.89" y="418.10" width="11.2" height="2.20" fill="#ff4953"/><path d="M1284.86 407.80V315.40Q1284.86 313.40 1286.86 313.40H1294.06Q1296.06 313.40 1296.06 315.40V407.80Z" fill="#00c296"/><rect x="1284.86" y="407.80" width="11.2" height="10.30" fill="#ff8c43"/><rect x="1284.86" y="418.10" width="11.2" height="2.20" fill="#ff4953"/><path d="M1305.82 407.80V315.40Q1305.82 313.40 1307.82 313.40H1315.02Q1317.02 313.40 1317.02 315.40V407.80Z" fill="#00c296"/><rect x="1305.82" y="407.80" width="11.2" height="10.30" fill="#ff8c43"/><rect x="1305.82" y="418.10" width="11.2" height="2.20" fill="#ff4953"/><path d="M1326.79 407.80V315.40Q1326.79 313.40 1328.79 313.40H1335.99Q1337.99 313.40 1337.99 315.40V407.80Z" fill="#00c296"/><rect x="1326.79" y="407.80" width="11.2" height="10.30" fill="#ff8c43"/><rect x="1326.79" y="418.10" width="11.2" height="2.20" fill="#ff4953"/><path d="M1347.76 407.80V315.40Q1347.76 313.40 1349.76 313.40H1356.96Q1358.96 313.40 1358.96 315.40V407.80Z" fill="#00c296"/><rect x="1347.76" y="407.80" width="11.2" height="10.30" fill="#ff8c43"/><rect x="1347.76" y="418.10" width="11.2" height="2.20" fill="#ff4953"/><path d="M1368.72 407.80V315.40Q1368.72 313.40 1370.72 313.40H1377.92Q1379.92 313.40 1379.92 315.40V407.80Z" fill="#00c296"/><rect x="1368.72" y="407.80" width="11.2" height="10.30" fill="#ff8c43"/><rect x="1368.72" y="418.10" width="11.2" height="2.20" fill="#ff4953"/><path d="M1389.68 407.80V315.40Q1389.68 313.40 1391.68 313.40H1398.88Q1400.88 313.40 1400.88 315.40V407.80Z" fill="#00c296"/><rect x="1389.68" y="407.80" width="11.2" height="10.30" fill="#ff8c43"/><rect x="1389.68" y="418.10" width="11.2" height="2.20" fill="#ff4953"/><path d="M1410.65 407.80V315.40Q1410.65 313.40 1412.65 313.40H1419.85Q1421.85 313.40 1421.85 315.40V407.80Z" fill="#00c296"/><rect x="1410.65" y="407.80" width="11.2" height="10.30" fill="#ff8c43"/><rect x="1410.65" y="418.10" width="11.2" height="2.20" fill="#ff4953"/><path d="M1431.61 407.80V315.40Q1431.61 313.40 1433.61 313.40H1440.81Q1442.81 313.40 1442.81 315.40V407.80Z" fill="#00c296"/><rect x="1431.61" y="407.80" width="11.2" height="10.30" fill="#ff8c43"/><rect x="1431.61" y="418.10" width="11.2" height="2.20" fill="#ff4953"/><path d="M1452.58 407.80V315.40Q1452.58 313.40 1454.58 313.40H1461.78Q1463.78 313.40 1463.78 315.40V407.80Z" fill="#00c296"/><rect x="1452.58" y="407.80" width="11.2" height="10.30" fill="#ff8c43"/><rect x="1452.58" y="418.10" width="11.2" height="2.20" fill="#ff4953"/><path d="M1458.6 313.5V420" stroke="#a9abb6" stroke-width="1" stroke-dasharray="2.5 2.5" opacity="0.8"/></svg>
<div class="t" style="left:1476.3px;top:365.8px;font-size:11.8px;color:#6c6e79;transform:translate(-50%,-50%) rotate(90deg);line-height:14px;">Current state</div>
<div class="t" style="top:425.69px;font-size:11px;color:#6c6e79;left:288.96px;width:200px;text-align:center;">Jan 18</div>
<div class="t" style="top:425.69px;font-size:11px;color:#6c6e79;left:351.86px;width:200px;text-align:center;">Feb 8</div>
<div class="t" style="top:425.69px;font-size:11px;color:#6c6e79;left:414.75px;width:200px;text-align:center;">Mar 1</div>
<div class="t" style="top:425.69px;font-size:11px;color:#6c6e79;left:477.65px;width:200px;text-align:center;">Mar 22</div>
<div class="t" style="top:425.69px;font-size:11px;color:#6c6e79;left:540.54px;width:200px;text-align:center;">Apr 12</div>
<div class="t" style="top:425.69px;font-size:11px;color:#6c6e79;left:603.44px;width:200px;text-align:center;">May 3</div>
<div class="t" style="top:425.69px;font-size:11px;color:#6c6e79;left:666.33px;width:200px;text-align:center;">May 24</div>
<div class="t" style="top:425.69px;font-size:11px;color:#6c6e79;left:729.23px;width:200px;text-align:center;">Jun 14</div>
<div class="t" style="top:425.69px;font-size:11px;color:#6c6e79;left:792.12px;width:200px;text-align:center;">Jul 5</div>
<div class="t" style="top:425.69px;font-size:11px;color:#6c6e79;left:855.02px;width:200px;text-align:center;">Jul 26</div>
<div class="t" style="top:425.69px;font-size:11px;color:#6c6e79;left:917.91px;width:200px;text-align:center;">Aug 16</div>
<div class="t" style="top:425.69px;font-size:11px;color:#6c6e79;left:980.81px;width:200px;text-align:center;">Sep 6</div>
<div class="t" style="top:425.69px;font-size:11px;color:#6c6e79;left:1043.70px;width:200px;text-align:center;">Sep 27</div>
<div class="t" style="top:425.69px;font-size:11px;color:#6c6e79;left:1106.60px;width:200px;text-align:center;">Oct 18</div>
<div class="t" style="top:425.69px;font-size:11px;color:#6c6e79;left:1169.49px;width:200px;text-align:center;">Nov 8</div>
<div class="t" style="top:425.69px;font-size:11px;color:#6c6e79;left:1232.39px;width:200px;text-align:center;">Nov 29</div>
<div class="t" style="top:425.69px;font-size:11px;color:#6c6e79;left:1295.28px;width:200px;text-align:center;">Dec 20</div>
<div class="t" style="top:425.69px;font-size:11px;color:#6c6e79;left:1358.18px;width:200px;text-align:center;">Jan 10</div>
<div class="r" style="left:275px;top:463px;width:110px;height:25.5px;border:1px solid #c4c7cf;border-radius:5px;background:#f0f1f4;"></div>
<div class="t" style="top:466.15px;font-size:14px;color:#6c6e79;left:283.30px;">View full report</div>
<div class="card" style="left:257px;top:522px;width:407px;height:331px;"></div>
<div class="r" style="left:257px;top:558px;width:407px;height:1px;background:#e6e7ed;"></div>
<div class="r" style="left:257px;top:696px;width:407px;height:1px;background:#e6e7ed;"></div>
<div class="card" style="left:678px;top:522px;width:408px;height:331px;"></div>
<div class="r" style="left:678px;top:558px;width:408px;height:1px;background:#e6e7ed;"></div>
<div class="r" style="left:678px;top:696px;width:408px;height:1px;background:#e6e7ed;"></div>
<div class="card" style="left:1101px;top:522px;width:407px;height:331px;"></div>
<div class="r" style="left:1101px;top:558px;width:407px;height:1px;background:#e6e7ed;"></div>
<div class="r" style="left:1101px;top:696px;width:407px;height:1px;background:#e6e7ed;"></div>
<div class="t" style="top:530.89px;font-size:14.75px;color:#191b23;font-weight:700;left:275.00px;">Backlinks to Review</div>
<svg class="ic" style="left:426.00px;top:535.70px" width="7" height="12" viewBox="0 0 7 12"><circle cx="3.5" cy="2.0" r="1.5" fill="#a9abb6"/><path d="M0.6 5.5H2.8L3.5 10.5H5.4" fill="none" stroke="#a9abb6" stroke-width="1.7"/></svg>
<div class="r" style="left:275.5px;top:580.7px;width:10px;height:10px;background:#ff4953;border-radius:50%;"></div>
<div class="t" style="top:576.32px;font-size:13.5px;color:#2a2c35;left:289.80px;">Toxic</div>
<svg class="ic" style="left:328.80px;top:580.70px" width="7" height="12" viewBox="0 0 7 12"><circle cx="3.5" cy="2.0" r="1.5" fill="#a9abb6"/><path d="M0.6 5.5H2.8L3.5 10.5H5.4" fill="none" stroke="#a9abb6" stroke-width="1.7"/></svg>
<div class="t" style="top:576.32px;font-size:13.5px;color:#0a70cf;right:891.00px;">342</div>
<div class="r" style="left:275.5px;top:606.3px;width:10px;height:10px;background:#ff8c43;border-radius:50%;"></div>
<div class="t" style="top:601.92px;font-size:13.5px;color:#2a2c35;left:289.80px;">Potentially toxic</div>
<svg class="ic" style="left:393.50px;top:606.30px" width="7" height="12" viewBox="0 0 7 12"><circle cx="3.5" cy="2.0" r="1.5" fill="#a9abb6"/><path d="M0.6 5.5H2.8L3.5 10.5H5.4" fill="none" stroke="#a9abb6" stroke-width="1.7"/></svg>
<div class="t" style="top:601.92px;font-size:13.5px;color:#0a70cf;right:891.00px;">2,121</div>
<div class="r" style="left:275.5px;top:631.7px;width:10px;height:10px;background:#00c296;border-radius:50%;"></div>
<div class="t" style="top:627.32px;font-size:13.5px;color:#2a2c35;left:289.80px;">Non-toxic</div>
<svg class="ic" style="left:357.30px;top:631.70px" width="7" height="12" viewBox="0 0 7 12"><circle cx="3.5" cy="2.0" r="1.5" fill="#a9abb6"/><path d="M0.6 5.5H2.8L3.5 10.5H5.4" fill="none" stroke="#a9abb6" stroke-width="1.7"/></svg>
<div class="t" style="top:627.32px;font-size:13.5px;color:#0a70cf;right:891.00px;">18,288</div>
<div class="r" style="left:275px;top:653px;width:370px;height:1px;background:#d1d3db;"></div>
<div class="t" style="top:660.82px;font-size:13.5px;color:#2a2c35;left:275.00px;">Whitelisted</div>
<svg class="ic" style="left:349.90px;top:665.20px" width="7" height="12" viewBox="0 0 7 12"><circle cx="3.5" cy="2.0" r="1.5" fill="#a9abb6"/><path d="M0.6 5.5H2.8L3.5 10.5H5.4" fill="none" stroke="#a9abb6" stroke-width="1.7"/></svg>
<div class="t" style="top:660.82px;font-size:13.5px;color:#6c6e79;right:891.00px;">0</div>
<div class="t" style="left:275px;top:711.8px;width:372px;font-size:13.75px;color:#2a2c35;line-height:18.2px;white-space:nowrap;">Make sure to review the quality and topic relevance of the<br>most toxic backlinks first. You can reach out to domain<br>owners to have backlinks removed, as well as disavow or<br>whitelist them in one click.</div>
<div class="r" style="left:275px;top:809.5px;width:121.5px;height:25.5px;background:#008ff8;border-radius:5px;"></div>
<div class="t" style="top:812.32px;font-size:13.5px;color:#fff;left:283.20px;">Review backlinks</div>
<div class="t" style="top:530.89px;font-size:14.75px;color:#191b23;font-weight:700;left:696.60px;">Backlink Removal Requests</div>
<svg class="ic" style="left:900.50px;top:535.70px" width="7" height="12" viewBox="0 0 7 12"><circle cx="3.5" cy="2.0" r="1.5" fill="#a9abb6"/><path d="M0.6 5.5H2.8L3.5 10.5H5.4" fill="none" stroke="#a9abb6" stroke-width="1.7"/></svg>
<svg class="ic" style="left:696px;top:576px" width="61" height="61" viewBox="0 0 61 61"><circle cx="30.5" cy="30.5" r="26.8" fill="none" stroke="#e0e1e9" stroke-width="7"/></svg>
<div class="t" style="top:589.19px;font-size:11px;color:#2a2c35;font-weight:700;left:626.50px;width:200px;text-align:center;">0</div>
<div class="t" style="top:604.02px;font-size:11.5px;color:#2a2c35;left:626.50px;width:200px;text-align:center;">emails</div>
<div class="r" style="left:772px;top:580.6px;width:10px;height:10px;background:#8fd0ff;border-radius:50%;"></div>
<div class="t" style="top:576.22px;font-size:13.5px;color:#2a2c35;left:787.00px;">To contact</div>
<svg class="ic" style="left:858.70px;top:580.60px" width="7" height="12" viewBox="0 0 7 12"><circle cx="3.5" cy="2.0" r="1.5" fill="#a9abb6"/><path d="M0.6 5.5H2.8L3.5 10.5H5.4" fill="none" stroke="#a9abb6" stroke-width="1.7"/></svg>
<div class="t" style="top:576.22px;font-size:13.5px;color:#6c6e79;right:469.00px;">0</div>
<div class="r" style="left:772px;top:606.3px;width:10px;height:10px;background:#2bb3ff;border-radius:50%;"></div>
<div class="t" style="top:601.92px;font-size:13.5px;color:#2a2c35;left:787.00px;">Not-replied</div>
<svg class="ic" style="left:863.30px;top:606.30px" width="7" height="12" viewBox="0 0 7 12"><circle cx="3.5" cy="2.0" r="1.5" fill="#a9abb6"/><path d="M0.6 5.5H2.8L3.5 10.5H5.4" fill="none" stroke="#a9abb6" stroke-width="1.7"/></svg>
<div class="t" style="top:601.92px;font-size:13.5px;color:#6c6e79;right:469.00px;">0</div>
<div class="r" style="left:772px;top:631.8px;width:10px;height:10px;background:#008ff8;border-radius:50%;"></div>
<div class="t" style="top:627.42px;font-size:13.5px;color:#2a2c35;left:787.00px;">Replied</div>
<svg class="ic" style="left:838.30px;top:631.80px" width="7" height="12" viewBox="0 0 7 12"><circle cx="3.5" cy="2.0" r="1.5" fill="#a9abb6"/><path d="M0.6 5.5H2.8L3.5 10.5H5.4" fill="none" stroke="#a9abb6" stroke-width="1.7"/></svg>
<div class="t" style="top:627.42px;font-size:13.5px;color:#6c6e79;right:469.00px;">0</div>
<div class="r" style="left:772px;top:653.5px;width:295px;height:1px;background:#d1d3db;"></div>
<div class="t" style="top:661.02px;font-size:13.5px;color:#2a2c35;left:772.20px;">Removed</div>
<svg class="ic" style="left:836.00px;top:665.40px" width="7" height="12" viewBox="0 0 7 12"><circle cx="3.5" cy="2.0" r="1.5" fill="#a9abb6"/><path d="M0.6 5.5H2.8L3.5 10.5H5.4" fill="none" stroke="#a9abb6" stroke-width="1.7"/></svg>
<div class="t" style="top:661.02px;font-size:13.5px;color:#6c6e79;right:469.00px;">0</div>
<div class="t" style="left:696.6px;top:711.8px;width:376px;font-size:13.75px;color:#2a2c35;line-height:18.2px;white-space:nowrap;">Move toxic backlinks from <span style="color:#006dca">For Review</span> to the Remove list and<br>send backlink removal requests to domain owners. Their<br>contact info will load automatically.</div>
<div class="r" style="left:696.6px;top:809.8px;width:102px;height:25px;border:1px solid #c4c7cf;border-radius:5px;background:#f4f5f9;"></div>
<div class="t" style="top:812.32px;font-size:13.5px;color:#6c6e79;left:705.00px;">Go to Remove</div>
<div class="t" style="top:530.89px;font-size:14.75px;color:#191b23;font-weight:700;left:1119.00px;">Items to Disavow</div>
<svg class="ic" style="left:1248.70px;top:535.70px" width="7" height="12" viewBox="0 0 7 12"><circle cx="3.5" cy="2.0" r="1.5" fill="#a9abb6"/><path d="M0.6 5.5H2.8L3.5 10.5H5.4" fill="none" stroke="#a9abb6" stroke-width="1.7"/></svg>
<div class="t" style="top:576.12px;font-size:13.5px;color:#2a2c35;left:1119.00px;">Not exported</div>
<svg class="ic" style="left:1207.30px;top:580.50px" width="7" height="12" viewBox="0 0 7 12"><circle cx="3.5" cy="2.0" r="1.5" fill="#a9abb6"/><path d="M0.6 5.5H2.8L3.5 10.5H5.4" fill="none" stroke="#a9abb6" stroke-width="1.7"/></svg>
<div class="t" style="top:576.12px;font-size:13.5px;color:#6c6e79;right:47.00px;">0</div>
<div class="t" style="top:601.62px;font-size:13.5px;color:#2a2c35;left:1119.00px;">Exported, not confirmed</div>
<svg class="ic" style="left:1274.00px;top:606.00px" width="7" height="12" viewBox="0 0 7 12"><circle cx="3.5" cy="2.0" r="1.5" fill="#a9abb6"/><path d="M0.6 5.5H2.8L3.5 10.5H5.4" fill="none" stroke="#a9abb6" stroke-width="1.7"/></svg>
<div class="t" style="top:601.62px;font-size:13.5px;color:#6c6e79;right:47.00px;">0</div>
<div class="r" style="left:1119px;top:628px;width:370px;height:1px;background:#d1d3db;"></div>
<div class="t" style="top:635.02px;font-size:13.5px;color:#2a2c35;left:1119.00px;">Disavowed</div>
<svg class="ic" style="left:1192.30px;top:639.40px" width="7" height="12" viewBox="0 0 7 12"><circle cx="3.5" cy="2.0" r="1.5" fill="#a9abb6"/><path d="M0.6 5.5H2.8L3.5 10.5H5.4" fill="none" stroke="#a9abb6" stroke-width="1.7"/></svg>
<div class="t" style="top:635.02px;font-size:13.5px;color:#6c6e79;right:47.00px;">0</div>
<div class="t" style="left:1119px;top:711.8px;width:375px;font-size:13.75px;color:#2a2c35;line-height:18.2px;white-space:nowrap;">Request Google to ignore toxic backlinks that cannot be<br>removed. Add them to Disavow to generate a single file and<br>upload it to the <span style="color:#006dca">Google Disavow Tool</span>. You can also import<br>your current disavow file.</div>
<div class="r" style="left:1119px;top:810px;width:104px;height:25px;border:1px solid #c4c7cf;border-radius:5px;background:#f4f5f9;"></div>
<div class="t" style="top:812.32px;font-size:13.5px;color:#6c6e79;left:1127.00px;">Go to Disavow</div>
<div class="r" style="left:1471px;top:807px;width:48px;height:48px;background:#ff642d;border-radius:50%;box-shadow:0 1px 3px rgba(0,0,0,.15);"></div>
<svg class="ic" style="left:1471px;top:807px" width="48" height="48" viewBox="0 0 48 48"><path d="M19.3 20.3A4.8 4.8 0 1 1 26.6 24.4C25 25.5 23.9 26.5 23.9 28.6V29.5" fill="none" stroke="#fff" stroke-width="2.1"/><circle cx="23.9" cy="32.4" r="1.5" fill="#fff"/></svg>
</body></html>
